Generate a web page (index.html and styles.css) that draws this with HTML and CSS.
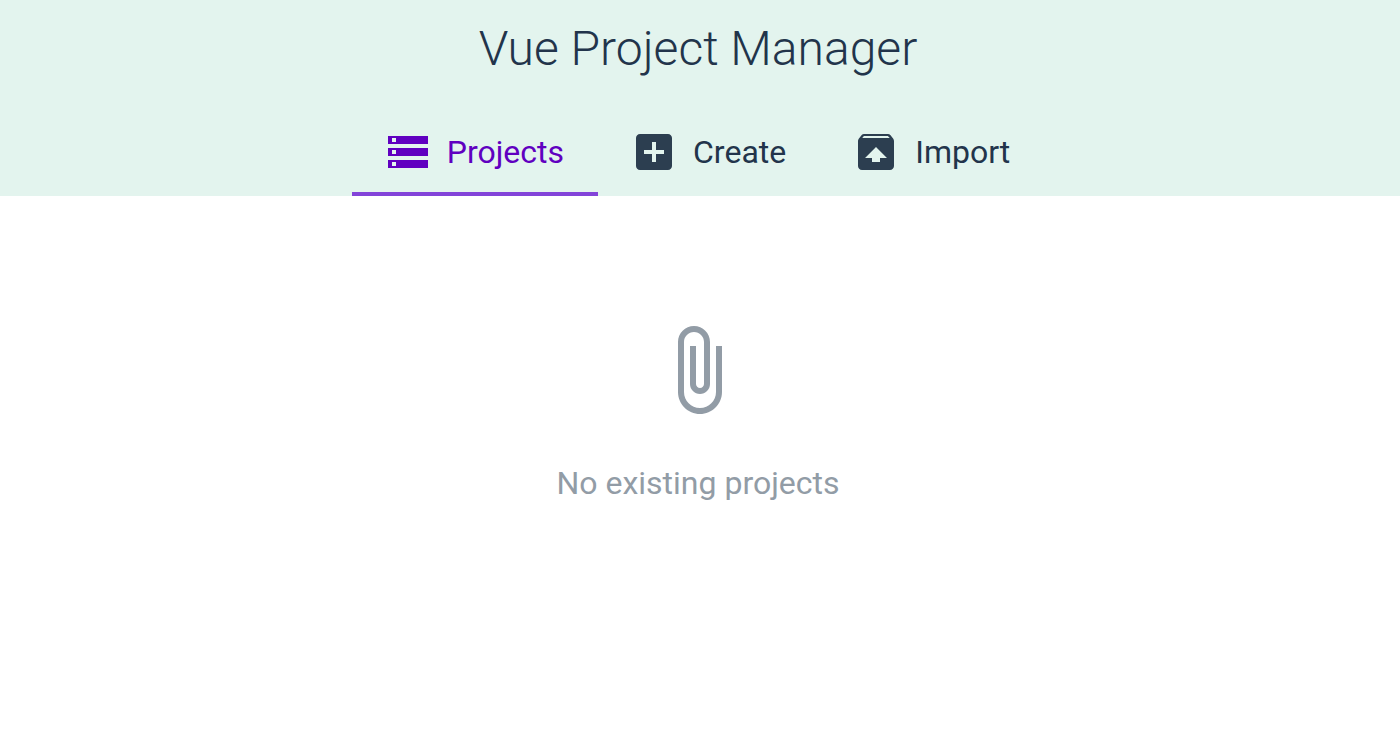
FILE: index.html
```
<!DOCTYPE html>
<html lang="en">
<head>
<meta charset="utf-8">
<meta name="viewport" content="width=device-width, initial-scale=1">
<title>Vue Project Manager</title>
<link rel="stylesheet" href="styles.css">
</head>
<body>
<header class="header">
  <h1 class="title">Vue Project Manager</h1>
  <nav class="tabs">
    <button class="tab tab-active" type="button" aria-current="page">
      <svg class="icon" viewBox="0 0 24 24" aria-hidden="true"><path d="M2 20h20v-4H2v4zm2-3h2v2H4v-2zM2 4v4h20V4H2zm4 3H4V5h2v2zm-4 7h20v-4H2v4zm2-3h2v2H4v-2z"/></svg>
      <span>Projects</span>
    </button>
    <button class="tab" type="button">
      <svg class="icon" viewBox="0 0 24 24" aria-hidden="true"><path d="M19 3H5c-1.11 0-2 .9-2 2v14c0 1.1.89 2 2 2h14c1.1 0 2-.9 2-2V5c0-1.1-.9-2-2-2zm-2 10h-4v4h-2v-4H7v-2h4V7h2v4h4v2z"/></svg>
      <span>Create</span>
    </button>
    <button class="tab" type="button">
      <svg class="icon" viewBox="0 0 24 24" aria-hidden="true"><path d="M20.55 5.22l-1.39-1.68C18.88 3.21 18.47 3 18 3H6c-.47 0-.88.21-1.15.55L3.46 5.22C3.17 5.57 3 6.01 3 6.5V19c0 1.1.89 2 2 2h14c1.1 0 2-.9 2-2V6.5c0-.49-.17-.93-.45-1.28zM12 9.5l5.5 5.5H14v2h-4v-2H6.5L12 9.5zM5.12 5l.82-1h12l.93 1H5.12z"/></svg>
      <span>Import</span>
    </button>
  </nav>
</header>
<main class="empty">
  <svg class="empty-icon" viewBox="0 0 24 24" aria-hidden="true"><path d="M16.5 6v11.5c0 2.21-1.79 4-4 4s-4-1.79-4-4V5c0-1.38 1.12-2.5 2.5-2.5s2.5 1.12 2.5 2.5v10.5c0 .55-.45 1-1 1s-1-.45-1-1V6H10v9.5c0 1.38 1.12 2.5 2.5 2.5s2.5-1.12 2.5-2.5V5c0-2.21-1.79-4-4-4S7 2.79 7 5v12.5c0 3.04 2.46 5.5 5.5 5.5s5.5-2.46 5.5-5.5V6h-1.5z"/></svg>
  <p class="empty-text">No existing projects</p>
</main>
</body>
</html>
```
FILE: styles.css
```
body {
  margin: 0;
  background: #fff;
  color: #22344b;
  font-family: Roboto, "Liberation Sans", sans-serif;
}

.header {
  display: flex;
  flex-direction: column;
  align-items: center;
  padding-right: 4px;
  background: #e3f4ee;
}

.title {
  margin: 0;
  padding: 17px 0 27px;
  font-size: 48px;
  font-weight: 300;
  line-height: 64px;
}

.tabs {
  display: flex;
}

.tab {
  display: flex;
  align-items: center;
  gap: 15px;
  height: 88px;
  padding: 3px 34px 0 32px;
  border: 0;
  border-bottom: 4px solid transparent;
  background: none;
  color: inherit;
  font: 400 32px/40px Roboto, "Liberation Sans", sans-serif;
  cursor: pointer;
}

.tab-active {
  border-bottom-color: #8344d9;
  color: #6000c0;
}

.icon {
  width: 48px;
  height: 48px;
  fill: #2c3e50;
}

.tab-active .icon {
  fill: currentColor;
}

.empty {
  display: flex;
  flex-direction: column;
  align-items: center;
  padding: 126px 4px 0 0;
  color: #929ca6;
}

.empty-icon {
  width: 96px;
  height: 96px;
  fill: currentColor;
}

.empty-text {
  margin: 43px 0 0;
  font-size: 32px;
  line-height: 44px;
}
```
